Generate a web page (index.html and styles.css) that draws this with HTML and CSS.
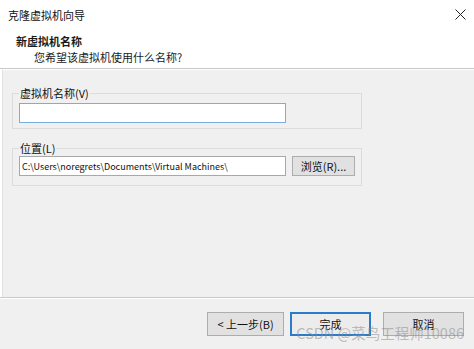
FILE: index.html
```html
<!DOCTYPE html>
<html lang="zh-CN">
<head>
    <meta charset="UTF-8">
    <meta name="viewport" content="width=device-width, initial-scale=1.0">
    <title>克隆虚拟机向导</title>
    <link rel="stylesheet" href="styles.css">
</head>
<body>
    <div class="dialog">
        <div class="titlebar">
            <span class="title">克隆虚拟机向导</span>
            <button class="close" aria-label="关闭">
                <svg width="11" height="11" viewBox="0 0 11 11">
                    <path d="M0.5 0.5 L10.5 10.5 M10.5 0.5 L0.5 10.5" stroke="#222" stroke-width="1" fill="none"/>
                </svg>
            </button>
        </div>

        <div class="header">
            <div class="heading">新虚拟机名称</div>
            <div class="subheading">您希望该虚拟机使用什么名称?</div>
        </div>

        <div class="content">
            <fieldset class="group name-group">
                <legend>虚拟机名称(V)</legend>
                <input type="text" class="text-input focused">
            </fieldset>

            <fieldset class="group location-group">
                <legend>位置(L)</legend>
                <div class="row">
                    <input type="text" class="text-input path" value="C:\Users\noregrets\Documents\Virtual Machines\">
                    <button class="btn browse">浏览(R)...</button>
                </div>
            </fieldset>
        </div>

        <div class="footer">
            <button class="btn">&lt; 上一步(B)</button>
            <button class="btn default">完成</button>
            <button class="btn cancel">取消</button>
        </div>

        <div class="watermark">CSDN @菜鸟工程师10086</div>
    </div>
</body>
</html>
```

FILE: styles.css
```css
body {
    margin: 0;
    font-family: "Noto Sans CJK SC", "Noto Sans", sans-serif;
    font-size: 11px;
    color: #1a1a1a;
    background: #fff;
}

.dialog {
    position: relative;
    width: 474px;
    height: 349px;
    overflow: hidden;
    display: flex;
    flex-direction: column;
}

.titlebar {
    height: 28px;
    display: flex;
    align-items: center;
    justify-content: space-between;
    padding: 0 8px 0 8px;
    background: #fff;
}

.title {
    font-size: 11px;
    color: #111;
    padding-top: 1px;
}

.close {
    border: none;
    background: none;
    padding: 0;
    width: 12px;
    height: 12px;
    display: flex;
    align-items: center;
    justify-content: center;
    margin-top: 1px;
}

.header {
    height: 41px;
    padding: 6px 0 0 16px;
    box-sizing: border-box;
    background: #fff;
    border-bottom: 1px solid #c9c9c9;
}

.heading {
    font-weight: bold;
    line-height: 15px;
}

.subheading {
    padding-left: 18px;
    line-height: 15px;
    padding-top: 1px;
}

.content {
    flex: 1;
    background: #f0f0f0;
    border-top: 1px solid #fff;
    border-left: 1px solid #e2e2e2;
    margin-left: 2px;
    padding: 16px 0 0 9px;
}

.group {
    width: 350px;
    margin: 0;
    padding: 3px 6px 5px 6px;
    border: 1px solid #dcdcdc;
    box-sizing: border-box;
}

.group legend {
    padding: 0 1px;
    margin-left: 0;
    line-height: 14px;
    color: #111;
}

.location-group {
    margin-top: 12px;
    padding-top: 1px;
    padding-bottom: 9px;
}

.text-input {
    display: block;
    width: 267px;
    height: 20px;
    box-sizing: border-box;
    border: 1px solid #a8a8a8;
    background: #fff;
    padding: 0 2px;
    font-family: inherit;
    font-size: 9px;
    color: #111;
    outline: none;
}

.text-input.focused {
    border-color: #7aaedf;
}

.row {
    display: flex;
    align-items: center;
    gap: 6px;
}

.btn {
    height: 24px;
    width: 77px;
    box-sizing: border-box;
    border: 1px solid #adadad;
    background: #e1e1e1;
    font-family: inherit;
    font-size: 11px;
    color: #111;
    padding: 0;
}

.browse {
    width: 63px;
    height: 20px;
}

.footer {
    height: 52px;
    box-sizing: border-box;
    border-top: 1px solid #c9c9c9;
    box-shadow: inset 0 1px 0 #fff;
    background: #f0f0f0;
    display: flex;
    align-items: flex-start;
    justify-content: flex-end;
    gap: 6px;
    padding: 14px 10px 0 0;
}

.btn.default {
    border: 2px solid #2a7bc8;
    background: #ececec;
    width: 81px;
}

.btn.cancel {
    margin-left: 6px;
    width: 81px;
}

.watermark {
    position: absolute;
    right: 10px;
    bottom: 6px;
    font-size: 14.5px;
    color: rgba(140, 140, 140, 0.55);
    pointer-events: none;
}
```
